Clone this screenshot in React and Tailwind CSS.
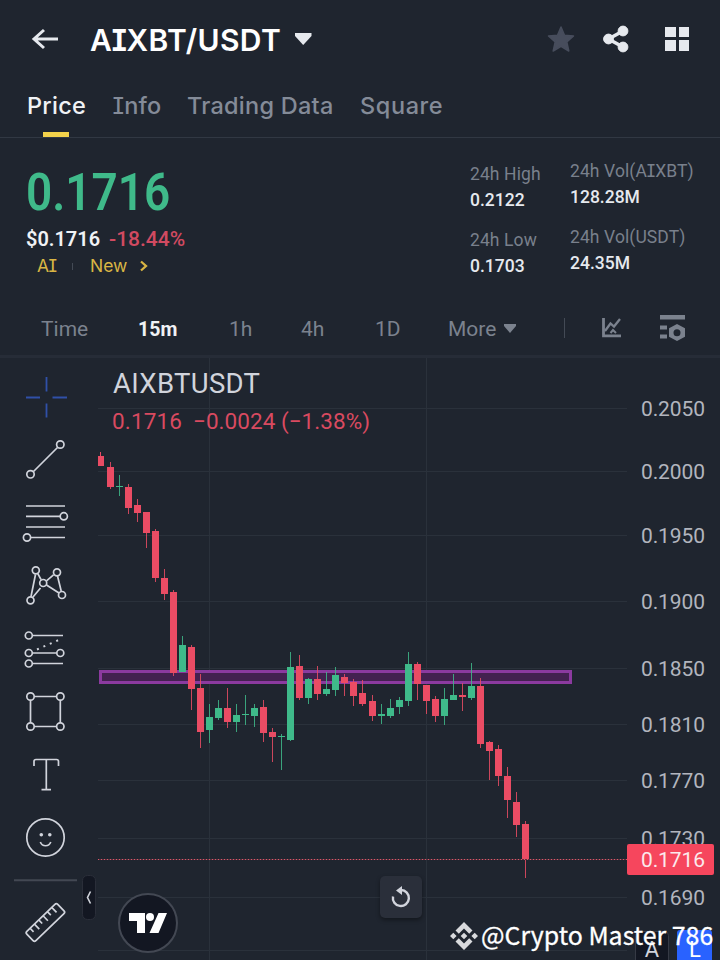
const UP = '#3fba8a';
const DOWN = '#ea4c64';

// x, high, body top, body bottom, low, direction (1 = up)
const candles = [
  [110, 462, 467, 487, 489, 0],
  [119, 475, 486, 487, 496, 1],
  [128, 484, 487, 508, 514, 0],
  [137, 499, 505, 513, 522, 0],
  [146, 512, 512, 533, 548, 0],
  [155, 529, 531, 578, 582, 0],
  [164, 569, 578, 594, 600, 0],
  [173, 590, 592, 673, 676, 0],
  [182, 636, 645, 672, 672, 1],
  [191, 645, 647, 689, 710, 0],
  [200, 674, 688, 732, 748, 0],
  [209, 704, 717, 730, 743, 1],
  [218, 700, 708, 718, 720, 1],
  [227, 688, 708, 722, 728, 0],
  [236, 704, 715, 722, 732, 1],
  [245, 695, 714, 715, 725, 1],
  [254, 704, 708, 716, 727, 1],
  [263, 700, 707, 733, 742, 0],
  [272, 728, 732, 737, 762, 0],
  [281, 734, 736, 737, 770, 1],
  [290, 652, 667, 740, 741, 1],
  [299, 655, 666, 698, 700, 0],
  [308, 678, 679, 698, 704, 1],
  [317, 666, 679, 694, 700, 0],
  [326, 672, 689, 694, 696, 1],
  [335, 667, 675, 690, 696, 1],
  [344, 674, 677, 683, 696, 0],
  [353, 679, 682, 696, 706, 0],
  [362, 680, 693, 704, 706, 0],
  [372, 695, 701, 716, 721, 0],
  [381, 704, 714, 716, 724, 1],
  [390, 699, 708, 716, 718, 1],
  [399, 697, 700, 707, 714, 1],
  [408, 652, 664, 701, 706, 1],
  [417, 662, 664, 684, 700, 0],
  [426, 685, 685, 701, 714, 0],
  [435, 696, 699, 716, 722, 0],
  [444, 688, 699, 716, 725, 1],
  [453, 674, 695, 700, 700, 1],
  [462, 683, 695, 697, 711, 0],
  [471, 663, 686, 698, 700, 1],
  [480, 678, 686, 744, 748, 0],
  [489, 741, 742, 751, 780, 0],
  [498, 745, 749, 776, 786, 0],
  [507, 767, 776, 800, 818, 0],
  [516, 792, 802, 825, 837, 0],
  [525, 821, 824, 860, 878, 0],
];

const levels = [
  ['0.2050', 408],
  ['0.2000', 471],
  ['0.1950', 535],
  ['0.1900', 601],
  ['0.1850', 668],
  ['0.1810', 724],
  ['0.1770', 780],
  ['0.1730', 838],
  ['0.1690', 897],
];

function Chart() {
  return (
    <svg width="622" height="602" viewBox="98 358 622 602" className="block font-['Roboto',sans-serif]">
      <g fill="#2a313b">
        {levels.map(([label, y]) => (
          <rect key={label} x="98" y={y} width="529" height="1" />
        ))}
        <rect x="98" y="950" width="529" height="1" />
        <rect x="209" y="358" width="1" height="602" />
        <rect x="426" y="358" width="1" height="602" />
      </g>
      <rect x="100.5" y="671.5" width="470" height="11" fill="#432150" stroke="#8b3a9f" strokeWidth="3" />
      <rect x="100" y="452" width="1" height="14" fill={DOWN} />
      <rect x="98" y="456" width="6" height="10" fill={DOWN} />
      {candles.map(([x, high, top, bottom, low, up]) => (
        <g key={x} fill={up ? UP : DOWN}>
          <rect x={x} y={high} width="1" height={low - high} opacity="0.85" />
          <rect x={x - 3} y={top} width="7" height={bottom - top} />
        </g>
      ))}
      <rect x="98" y="859" width="529" height="1" fill="#5a323e" />
      <line x1="98" x2="627" y1="859.5" y2="859.5" stroke="#d9586a" strokeDasharray="1 2" />
      <text x="113" y="393" fontSize="27.5" fill="#d1d4dc" textLength="147">AIXBTUSDT</text>
      <g fontSize="22.5" fill="#d94a60">
        <text x="112" y="429" textLength="70">0.1716</text>
        <text x="193" y="429" textLength="177">−0.0024 (−1.38%)</text>
      </g>
      <g fontSize="21" fill="#b2b5be">
        {levels.map(([label, y]) => (
          <text key={label} x="641" y={y + 8} textLength="64">{label}</text>
        ))}
      </g>
      <rect x="627" y="844" width="87" height="31" rx="2" fill="#f6465d" />
      <text x="641" y="867" fontSize="21" fill="#fbe9ec" textLength="64">0.1716</text>
      <rect x="635.5" y="931.5" width="33" height="40" rx="4" fill="#131722" stroke="#363a45" />
      <text x="652" y="957" fontSize="22" fill="#d1d4dc" textAnchor="middle">A</text>
      <rect x="677" y="930" width="35" height="40" rx="3" fill="#2962ff" />
      <text x="695" y="957" fontSize="22" fill="#fff" textAnchor="middle">L</text>
    </svg>
  );
}

function Toolbar() {
  return (
    <svg width="98" height="602" viewBox="0 358 98 602" fill="none" stroke="#d1d4dc" strokeWidth="1.7" className="block">
      <path d="M46.500 377v14.500M46.500 403.500v14M26 397.500h14M52.500 397.500h14.500" stroke="#3050a8" strokeWidth="1.8" />
      <path d="M33.500 471.500 57.500 447.500" />
      <circle cx="30.500" cy="474.300" r="3.700" />
      <circle cx="60.300" cy="444.500" r="3.700" />
      <path d="M26 506h39M26 516.300h34M26 527h39M31 537.500h34" />
      <circle cx="63.800" cy="516.300" r="3.600" />
      <circle cx="27" cy="537.500" r="3.600" />
      <path d="M35.500 574.500 31 596.500M37.800 573.700 41 579.500M46.500 580.800 53.500 574.800M33 597l7.500-9M46.500 585l12.500 8M57.500 576l3.700 15" />
      <circle cx="35.800" cy="570.300" r="3.500" />
      <circle cx="57" cy="572.300" r="3.500" />
      <circle cx="43.200" cy="583" r="3.500" />
      <circle cx="30.500" cy="600.300" r="3.500" />
      <circle cx="62" cy="595" r="3.500" />
      <path d="M32.500 635.500H63M32.500 653H56.500M32.500 663.500H63" />
      <path d="M37 649.500 62 638.500" strokeDasharray="2 5" strokeWidth="2" />
      <circle cx="28.800" cy="635.500" r="3.500" />
      <circle cx="28.800" cy="653" r="3.500" />
      <circle cx="60.300" cy="653" r="3.500" />
      <circle cx="28.800" cy="663.500" r="3.500" />
      <path d="M34 696.500h22.500M34 726.500h22.500M30.500 700v23M60.300 700v23" />
      <circle cx="30.500" cy="696.500" r="3.700" />
      <circle cx="60.300" cy="696.500" r="3.700" />
      <circle cx="30.500" cy="726.500" r="3.700" />
      <circle cx="60.300" cy="726.500" r="3.700" />
      <path d="M34 766v-4.500q0-2 2-2h20.500q2 0 2 2v4.500M46.300 759.500v30M41.500 789.700h9.500" />
      <circle cx="45.500" cy="837.500" r="18.700" />
      <path d="M40.300 842c2 5 8.500 5 10.500 0" />
      <circle cx="41.300" cy="834.800" r="1.800" fill="#d1d4dc" stroke="none" />
      <circle cx="49.800" cy="834.800" r="1.800" fill="#d1d4dc" stroke="none" />
      <path d="M14 880.200h63" stroke="#434853" strokeWidth="2" />
      <rect x="82.500" y="875.500" width="13" height="44" rx="5" fill="#131722" stroke="#2a2e39" strokeWidth="1" />
      <path d="m90.500 891.500-3 6 3 6" strokeWidth="1.600" />
      <g transform="translate(45.400 922.500) rotate(-44)">
        <rect x="-21.500" y="-6.500" width="43" height="13" rx="2" />
        <path d="M-15 -6.500v5M-9 -6.500v7M-3 -6.500v5M3 -6.500v7M9 -6.500v5M15 -6.500v7" />
      </g>
    </svg>
  );
}

// Capital I with slab serifs
function SlabI() {
  return <span className="-mx-[0.07em] font-['DejaVu_Sans_Mono',monospace]">I</span>;
}

function Stat({ label, value }) {
  return (
    <div className="h-[66px]">
      <div className="h-[26px] whitespace-nowrap text-[17.5px] leading-[26px] tracking-[0.1px] text-[#79808c]">{label}</div>
      <div className="h-[26px] text-[17.5px] font-medium leading-[26px] text-[#e6e9ee]">{value}</div>
    </div>
  );
}

export default function App() {
  return (
    <div className="relative h-[960px] w-[720px] overflow-hidden bg-[#1f252f] font-['Roboto',sans-serif]">
      <header className="flex h-[77px] items-center pl-[31px] pr-[31px]">
        <svg width="28" height="22" viewBox="0 0 28 22" fill="none" stroke="#e6e9ee" strokeWidth="3">
          <path d="M27 11H3M13 2 3 11l10 9" />
        </svg>
        <h1 className="ml-[31px] mt-[3px] w-[190px] whitespace-nowrap font-['Inter',sans-serif] text-[30px] font-semibold leading-[40px] tracking-[0.4px] text-white">
          A<SlabI />XBT/USDT
        </h1>
        <svg className="ml-[15px]" width="17" height="14" viewBox="0 0 17 14" fill="#e6e9ee">
          <path d="M0 1h16.500v3L8.200 13 0 4z" />
        </svg>
        <svg className="ml-auto" width="28" height="28" viewBox="0 0 28 28" fill="#474d5c" stroke="#474d5c" strokeWidth="1.500" strokeLinejoin="round">
          <path d="m14 2 3.500 8.200 9 .8-6.700 6 2 9-7.800-4.700L6.200 26l2-9-6.700-6 9-.8z" />
        </svg>
        <svg className="ml-[28px]" width="26" height="28" viewBox="0 0 26 28" fill="#e6e9ee" stroke="#e6e9ee">
          <path d="M20 6 5.500 14 20 22" fill="none" strokeWidth="3.500" />
          <circle cx="20" cy="6" r="4.900" />
          <circle cx="5.500" cy="14" r="4.900" />
          <circle cx="20" cy="22" r="4.900" />
        </svg>
        <div className="ml-[36px] grid grid-cols-2 gap-[3px]">
          <i className="size-[10.5px] bg-[#e6e9ee]" />
          <i className="size-[10.5px] bg-[#e6e9ee]" />
          <i className="size-[10.5px] bg-[#e6e9ee]" />
          <i className="size-[10.5px] bg-[#e6e9ee]" />
        </div>
      </header>

      <nav className="flex h-[61px] border-b border-[#313843] pl-[27px] pt-px font-['Inter',sans-serif] text-[23.5px] font-medium leading-[56px] tracking-[0.25px] text-[#848b98]">
        <div className="flex w-[86px] flex-col text-[#f0f2f5]">
          <span className="h-[54px]">Price</span>
          <span className="ml-[16px] h-[5px] w-[26px] bg-[#f3d24b]" />
        </div>
        <span className="w-[74px] whitespace-nowrap"><SlabI />nfo</span>
        <span className="w-[173px] whitespace-nowrap">Trading Data</span>
        <span className="tracking-[0.6px]">Square</span>
      </nav>

      <section className="flex h-[163px]">
        <div className="w-[470px] pl-[26px] pt-[25px]">
          <div className="h-[62px] origin-left scale-x-[0.9] text-[51px] font-semibold leading-[60px] text-[#3fba8a]">0.1716</div>
          <div className="flex h-[28px] text-[21px] leading-[28px]">
            <span className="w-[83px] origin-left scale-x-[0.95] font-semibold text-[#f0f2f5]">$0.1716</span>
            <span className="font-medium text-[#d14a61]">-18.44%</span>
          </div>
          <div className="flex h-[26px] items-center pl-[11px] font-['Inter',sans-serif] text-[17.5px] leading-[26px] text-[#d9b544]">
            <span className="w-[35px] whitespace-nowrap tracking-[-0.3px]">A<SlabI /></span>
            <i className="h-[7px] w-px bg-[#434a55]" />
            <span className="ml-[17px] w-[50px]">New</span>
            <svg width="8" height="12" viewBox="0 0 8 12" fill="none" stroke="#d9b544" strokeWidth="2.300">
              <path d="m1 1.500 5 4.500-5 4.500" />
            </svg>
          </div>
        </div>
        <div className="w-[100px] pt-[23px]">
          <Stat label="24h High" value="0.2122" />
          <Stat label="24h Low" value="0.1703" />
        </div>
        <div className="pt-[20px]">
          <Stat label={<>24h Vol(A<SlabI />XBT)</>} value="128.28M" />
          <Stat label="24h Vol(USDT)" value="24.35M" />
        </div>
      </section>

      <nav className="flex h-[54px] items-center pl-[41px] text-[21px] text-[#7b828e]">
        <span className="mt-[3px] w-[97px]">Time</span>
        <span className="mt-[3px] w-[91px] origin-left scale-x-[0.93] font-bold text-[#f0f2f5]">15m</span>
        <span className="mt-[3px] w-[72px]">1h</span>
        <span className="mt-[3px] w-[74px]">4h</span>
        <span className="mt-[3px] w-[73px]">1D</span>
        <span className="mt-[3px] w-[56px]">More</span>
        <svg width="12" height="9" viewBox="0 0 12 9" fill="#7b828e">
          <path d="M0 0h12v2L6 9 0 2z" />
        </svg>
        <i className="ml-[48px] h-[20px] w-px bg-[#434a55]" />
        <svg className="ml-[37px]" width="20" height="20" viewBox="0 0 20 20" fill="none" stroke="#7b828e" strokeWidth="2.800">
          <path d="M1.500 0v17.800H19" />
          <path d="m3 13 5.500-7.500 3.500 3L18 1" strokeWidth="2.300" />
          <path d="m8.500 15 2.500-3 3 3" strokeWidth="2" />
        </svg>
        <svg className="ml-[38px]" width="26" height="27" viewBox="0 0 26 27" fill="#7b828e">
          <path d="M0 0h25v4.500H0zM0 10.500h7v4H0zM0 19.500h7v4H0z" />
          <path fillRule="evenodd" d="m17 9 8 4.200v8.600L17 26l-8-4.200v-8.600zm0 5.200a3.500 3.500 0 1 0 0 7 3.500 3.500 0 0 0 0-7z" />
        </svg>
      </nav>

      <div className="h-[3px] bg-[#262c37]" />

      <main className="flex h-[602px]">
        <Toolbar />
        <Chart />
      </main>

      <div className="absolute left-[118px] top-[893px] flex size-[60px] items-center justify-center rounded-full border-2 border-[#434853] bg-[#131722]">
        <svg width="38" height="20" viewBox="0 0 38 20" fill="#fff">
          <path d="M0 0h16v20H8V8H0zM29.500 0H38L29.500 20h-9z" />
          <circle cx="21" cy="4" r="4" />
        </svg>
      </div>

      <div className="absolute left-[380px] top-[876px] flex size-[42px] items-center justify-center rounded-[5px] bg-[#2a2f3a] shadow-[0_2px_4px_rgba(0,0,0,0.4)]">
        <svg width="20" height="22" viewBox="0 0 20 22" fill="none" stroke="#d1d4dc" strokeWidth="2.400">
          <path d="M2 10.500a8 8 0 1 0 8-6.500" />
          <path d="M11 0v9L5 4.500z" fill="#d1d4dc" stroke="none" />
        </svg>
      </div>

      <div className="absolute left-[450px] top-[920px] flex items-center">
        <svg className="mt-[2px]" width="28" height="28" viewBox="0 0 28 28" fill="#d9dadd">
          <path d="m14 0 8.500 8.500-3.300 3.300L14 6.600l-5.200 5.200-3.300-3.300zM14 28l8.500-8.500-3.300-3.300L14 21.400l-5.200-5.200-3.300 3.300zM14 10.700l3.300 3.300-3.300 3.300-3.300-3.300zM3.300 10.700 6.600 14l-3.300 3.300L0 14zM24.700 10.700 28 14l-3.300 3.300-3.300-3.300z" />
        </svg>
        <span className="-mt-[2px] ml-[3px] whitespace-nowrap font-['Noto_Sans_CJK_SC',sans-serif] text-[24.9px] leading-[32px] text-white [-webkit-text-stroke:0.3px_white]">@Crypto Master 786</span>
      </div>
    </div>
  );
}
